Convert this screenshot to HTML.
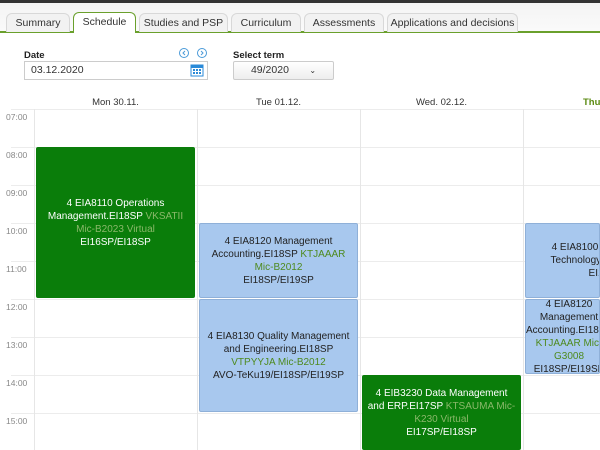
<!DOCTYPE html>
<html><head><style>
*{margin:0;padding:0;box-sizing:border-box}
html,body{width:600px;height:450px;overflow:hidden}
body{background:#fff;font-family:"Liberation Sans",sans-serif;font-size:10px;color:#333}
#w{position:relative;width:600px;height:450px;overflow:hidden}
.top{position:absolute;left:0;top:0;width:600px;height:3px;background:#333}
.tabbar{position:absolute;left:0;top:3px;width:600px;height:30px;background:linear-gradient(#f4f4f4,#fafafa);border-bottom:2px solid #6aa02c}
.tab{position:absolute;top:10px;height:19px;background:#f2f2f2;border:1px solid #d8d8d8;border-bottom:none;border-radius:6px 6px 0 0;text-align:center;line-height:19px;font-size:10.5px;color:#333;white-space:nowrap}
.tab.act{background:#fff;border:1px solid #6aa02c;border-bottom:none;height:21px;top:9px}
.lbl{position:absolute;font-weight:bold;font-size:9.5px;color:#222}
.inp{position:absolute;border:1px solid #ccc;background:#fff;font-size:10.5px;padding-left:6px;line-height:17px}
.hd{position:absolute;top:97px;font-size:9.5px;text-align:center}
.vl{position:absolute;top:109px;width:1px;height:341px;background:#e6e6e6}
.hl{position:absolute;left:11px;width:589px;height:1px;background:#ececec}
.tm{position:absolute;left:6px;font-size:8.5px;color:#888}
.ev{position:absolute;border-radius:2px;text-align:center;font-size:10px;line-height:13px;display:flex;align-items:center;justify-content:center;padding:0 4px;color:#222;overflow:hidden}
.ev>div{width:100%}
.g{background:#0a7d0a;color:#fff}.g i{color:#8ab86a;font-style:normal}
.b{background:#a8c8ee;border:1px solid #8fb0d8}.b i{color:#4e8a1e;font-style:normal}
</style></head><body><div id="w">
<div class="top"></div>
<div class="tabbar">
<div class="tab" style="left:6px;width:64px">Summary</div>
<div class="tab act" style="left:73px;width:63px">Schedule</div>
<div class="tab" style="left:139px;width:89px">Studies and PSP</div>
<div class="tab" style="left:231px;width:70px">Curriculum</div>
<div class="tab" style="left:304px;width:80px">Assessments</div>
<div class="tab" style="left:387px;width:131px">Applications and decisions</div>
</div>
<div class="lbl" style="left:24px;top:50px">Date</div>
<svg style="position:absolute;left:178px;top:47px" width="32" height="12"><circle cx="6" cy="6" r="4.5" fill="none" stroke="#4a9ad8"/><path d="M7 4L5 6L7 8" fill="none" stroke="#4a9ad8"/><circle cx="24" cy="6" r="4.5" fill="none" stroke="#4a9ad8"/><path d="M23 4L25 6L23 8" fill="none" stroke="#4a9ad8"/></svg>
<div class="inp" style="left:24px;top:61px;width:184px;height:19px">03.12.2020</div>
<svg style="position:absolute;left:190px;top:63px" width="14" height="14"><rect x="1" y="2" width="12" height="11" fill="#fff" stroke="#2a8ad8"/><rect x="1" y="2" width="12" height="3" fill="#2a8ad8"/><g fill="#2a8ad8"><rect x="3" y="6" width="2" height="2"/><rect x="6" y="6" width="2" height="2"/><rect x="9" y="6" width="2" height="2"/><rect x="3" y="9" width="2" height="2"/><rect x="6" y="9" width="2" height="2"/><rect x="9" y="9" width="2" height="2"/></g></svg>
<div class="lbl" style="left:233px;top:50px">Select term</div>
<div class="inp" style="left:233px;top:61px;width:101px;height:19px;background:linear-gradient(#fff,#eee);border-radius:2px;padding-left:0;text-align:center">49/2020 &nbsp;&nbsp;&nbsp;&nbsp;&nbsp;&nbsp;<span style="font-size:8px">&#8964;</span></div>
<div class="hd" style="left:34px;width:163px">Mon 30.11.</div>
<div class="hd" style="left:197px;width:163px">Tue 01.12.</div>
<div class="hd" style="left:360px;width:163px">Wed. 02.12.</div>
<div class="hd" style="left:583px;color:#5a8a10;font-weight:bold">Thu</div>
<div class="hl" style="top:109px"></div>
<div class="hl" style="top:147px"></div><div class="hl" style="top:185px"></div><div class="hl" style="top:223px"></div><div class="hl" style="top:261px"></div><div class="hl" style="top:299px"></div><div class="hl" style="top:337px"></div><div class="hl" style="top:375px"></div><div class="hl" style="top:413px"></div>
<div class="vl" style="left:34px"></div><div class="vl" style="left:197px"></div><div class="vl" style="left:360px"></div><div class="vl" style="left:523px"></div>
<div class="tm" style="top:112px">07:00</div><div class="tm" style="top:150px">08:00</div><div class="tm" style="top:188px">09:00</div><div class="tm" style="top:226px">10:00</div><div class="tm" style="top:264px">11:00</div><div class="tm" style="top:302px">12:00</div><div class="tm" style="top:340px">13:00</div><div class="tm" style="top:378px">14:00</div><div class="tm" style="top:416px">15:00</div>
<div class="ev g" style="left:36px;top:147px;width:159px;height:151px"><div>4 EIA8110 Operations Management.EI18SP <i>VKSATII Mic-B2023 Virtual</i><br>EI16SP/EI18SP</div></div>
<div class="ev b" style="left:199px;top:223px;width:159px;height:75px"><div>4 EIA8120 Management Accounting.EI18SP <i>KTJAAAR Mic-B2012</i><br>EI18SP/EI19SP</div></div>
<div class="ev b" style="left:199px;top:299px;width:159px;height:113px"><div>4 EIA8130 Quality Management and Engineering.EI18SP <i>VTPYYJA Mic-B2012</i><br>AVO-TeKu19/EI18SP/EI19SP</div></div>
<div class="ev g" style="left:362px;top:375px;width:159px;height:75px"><div>4 EIB3230 Data Management and ERP.EI17SP <i>KTSAUMA Mic-K230 Virtual</i><br>EI17SP/EI18SP</div></div>
<div class="ev b" style="left:525px;top:223px;width:75px;height:75px;justify-content:flex-start;padding:0"><div style="width:159px;flex:none;padding:0 4px">4 EIA8100 Management Technology 2.EI18SP <i>F3</i><br>EI16SP</div></div>
<div class="ev b" style="left:525px;top:299px;width:75px;height:75px;justify-content:flex-start;padding:0"><div style="width:88px;flex:none;margin-left:-1px">4 EIA8120 Management Accounting.EI18SP <i>KTJAAAR Mic-G3008</i><br>EI18SP/EI19SP</div></div>
</div></body></html>
